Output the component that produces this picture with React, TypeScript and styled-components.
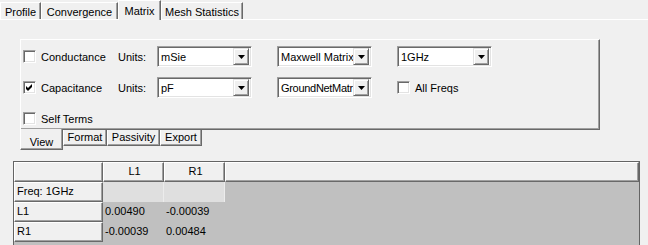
import React from 'react';
import styled, { createGlobalStyle } from 'styled-components';

const GlobalStyle = createGlobalStyle`
  body {
    margin: 0;
    background: #f0f0f0;
    font-family: "Liberation Sans", Arial, sans-serif;
    font-size: 11px;
    color: #000;
  }
`;

const Page = styled.div`
  width: 648px;
  height: 245px;
  overflow: hidden;
  display: flex;
  flex-direction: column;
`;

const TopTabs = styled.div`
  display: flex;
  align-items: flex-end;
  height: 20px;
  box-sizing: border-box;
  border-bottom: 1px solid #fff;
`;

const TopTab = styled.div<{ $active?: boolean; $w: number }>`
  width: ${p => p.$w}px;
  height: ${p => (p.$active ? 20 : 17)}px;
  margin-bottom: ${p => (p.$active ? -1 : 0)}px;
  box-sizing: border-box;
  border-top: 1px solid #fff;
  border-left: 1px solid #fff;
  border-right: 1px solid #696969;
  box-shadow: inset -1px 0 #a0a0a0;
  background: #f0f0f0;
  padding-top: ${p => (p.$active ? 4 : 3)}px;
  line-height: 13px;
  text-align: center;
  white-space: nowrap;
  position: relative;
  z-index: ${p => (p.$active ? 1 : 0)};
`;

const Body = styled.div`
  display: flex;
  flex-direction: column;
  padding-top: 19px;
`;

const Panel = styled.div`
  margin-left: 20px;
  width: 580px;
  height: 91px;
  box-sizing: border-box;
  border: 1px solid;
  border-color: #fff #696969 #696969 #fff;
  box-shadow: inset -1px -1px #a0a0a0;
  padding: 6px 0 0 2px;
  display: flex;
  flex-direction: column;
  gap: 10px;
`;

const Row = styled.div`
  display: flex;
  align-items: center;
  height: 21px;
`;

const CheckField = styled.label<{ $w?: number }>`
  display: flex;
  align-items: center;
  width: ${p => (p.$w ? `${p.$w}px` : 'auto')};
  white-space: nowrap;
`;

const Box = styled.span`
  width: 13px;
  height: 13px;
  box-sizing: border-box;
  border: 1px solid;
  border-color: #a0a0a0 #fff #fff #a0a0a0;
  box-shadow: inset 1px 1px #696969, inset -1px -1px #e3e3e3;
  background: #fff;
  margin-right: 5px;
  display: flex;
  flex-shrink: 0;
`;

const UnitsLabel = styled.span`
  width: 39px;
`;

const Combo = styled.div`
  width: 95px;
  height: 21px;
  box-sizing: border-box;
  border: 1px solid;
  border-color: #a0a0a0 #fff #fff #a0a0a0;
  box-shadow: inset 1px 1px #696969, inset -1px -1px #e3e3e3;
  background: #fff;
  padding: 2px;
  display: flex;
  align-items: center;
`;

const ComboValue = styled.span<{ $tight?: boolean }>`
  flex: 1;
  overflow: hidden;
  white-space: nowrap;
  padding-left: 1px;
  letter-spacing: ${p => (p.$tight ? '-0.3px' : 'normal')};
`;

const DropButton = styled.span`
  width: 16px;
  height: 17px;
  flex-shrink: 0;
  box-sizing: border-box;
  border: 1px solid;
  border-color: #e3e3e3 #696969 #696969 #e3e3e3;
  box-shadow: inset 1px 1px #fff, inset -1px -1px #a0a0a0;
  background: #f0f0f0;
  display: flex;
  align-items: center;
  justify-content: center;
`;

const Spacer = styled.span`
  width: 25px;
`;

const BottomTabs = styled.div`
  display: flex;
  align-items: flex-start;
  margin-left: 20px;
`;

const BottomTab = styled.div<{ $active?: boolean; $w: number }>`
  width: ${p => p.$w}px;
  height: ${p => (p.$active ? 21 : 16)}px;
  margin-top: ${p => (p.$active ? -1 : 0)}px;
  box-sizing: border-box;
  border-left: 1px solid #fff;
  border-right: 1px solid #696969;
  border-bottom: 1px solid #696969;
  box-shadow: inset -1px -1px #a0a0a0;
  background: #f0f0f0;
  padding-top: ${p => (p.$active ? 7 : 1)}px;
  line-height: 13px;
  text-align: center;
  white-space: nowrap;
`;

const Grid = styled.div`
  margin: 11px 0 0 13px;
  width: 627px;
  height: 100px;
  box-sizing: border-box;
  border: 1px solid #646464;
  border-bottom: none;
  background: #c0c0c0;
  display: flex;
  flex-direction: column;
`;

const GridRow = styled.div<{ $header?: boolean }>`
  display: flex;
  height: 20px;
  background: ${p => (p.$header ? '#f0f0f0' : 'transparent')};
`;

const HeadCell = styled.div<{ $w?: number; $center?: boolean }>`
  width: ${p => (p.$w ? `${p.$w}px` : 'auto')};
  flex: ${p => (p.$w ? 'none' : '1')};
  height: 20px;
  box-sizing: border-box;
  border: 1px solid;
  border-color: #fff #696969 #696969 #fff;
  box-shadow: inset -1px -1px #a0a0a0;
  background: #f0f0f0;
  line-height: 17px;
  padding-left: 2px;
  text-align: ${p => (p.$center ? 'center' : 'left')};
  white-space: nowrap;
`;

const DataCell = styled.div<{ $light?: boolean }>`
  width: 61px;
  height: 20px;
  box-sizing: border-box;
  background: ${p => (p.$light ? '#dfdfdf' : 'transparent')};
  border-right: 1px solid ${p => (p.$light ? '#ececec' : 'transparent')};
  line-height: 19px;
  padding-left: 2px;
  white-space: nowrap;
`;

const Check = () => (
  <svg width="11" height="11" viewBox="0 0 11 11">
    <path d="M2 4 L4 6 L8 2 L8 5 L4 9 L2 7 Z" fill="#000" />
  </svg>
);

const Arrow = () => (
  <svg width="7" height="4" viewBox="0 0 7 4">
    <polygon points="0,0 7,0 3.5,4" fill="#000" />
  </svg>
);

const Dropdown = ({ value, tight }: { value: string; tight?: boolean }) => (
  <Combo>
    <ComboValue $tight={tight}>{value}</ComboValue>
    <DropButton>
      <Arrow />
    </DropButton>
  </Combo>
);

const CheckBox = ({ label, checked, w }: { label: string; checked?: boolean; w?: number }) => (
  <CheckField $w={w}>
    <Box>{checked && <Check />}</Box>
    {label}
  </CheckField>
);

const columns = ['L1', 'R1'];
const rows = [
  { name: 'L1', values: ['0.00490', '-0.00039'] },
  { name: 'R1', values: ['-0.00039', '0.00484'] },
];

export default function App() {
  return (
    <Page>
      <GlobalStyle />
      <TopTabs>
        <TopTab $w={41}>Profile</TopTab>
        <TopTab $w={77}>Convergence</TopTab>
        <TopTab $w={43} $active>Matrix</TopTab>
        <TopTab $w={82}>Mesh Statistics</TopTab>
      </TopTabs>
      <Body>
        <Panel>
          <Row>
            <CheckBox label="Conductance" w={95} />
            <UnitsLabel>Units:</UnitsLabel>
            <Dropdown value="mSie" />
            <Spacer />
            <Dropdown value="Maxwell Matrix" />
            <Spacer />
            <Dropdown value="1GHz" />
          </Row>
          <Row>
            <CheckBox label="Capacitance" checked w={95} />
            <UnitsLabel>Units:</UnitsLabel>
            <Dropdown value="pF" />
            <Spacer />
            <Dropdown value="GroundNetMatr" tight />
            <Spacer />
            <CheckBox label="All Freqs" />
          </Row>
          <Row>
            <CheckBox label="Self Terms" />
          </Row>
        </Panel>
        <BottomTabs>
          <BottomTab $w={43} $active>View</BottomTab>
          <BottomTab $w={44}>Format</BottomTab>
          <BottomTab $w={53}>Passivity</BottomTab>
          <BottomTab $w={42}>Export</BottomTab>
        </BottomTabs>
        <Grid>
          <GridRow $header>
            <HeadCell $w={89} />
            {columns.map(c => (
              <HeadCell key={c} $w={61} $center>{c}</HeadCell>
            ))}
            <HeadCell />
          </GridRow>
          <GridRow>
            <HeadCell $w={89}>Freq: 1GHz</HeadCell>
            {columns.map(c => (
              <DataCell key={c} $light />
            ))}
          </GridRow>
          {rows.map(r => (
            <GridRow key={r.name}>
              <HeadCell $w={89}>{r.name}</HeadCell>
              {r.values.map((v, i) => (
                <DataCell key={i}>{v}</DataCell>
              ))}
            </GridRow>
          ))}
        </Grid>
      </Body>
    </Page>
  );
}
